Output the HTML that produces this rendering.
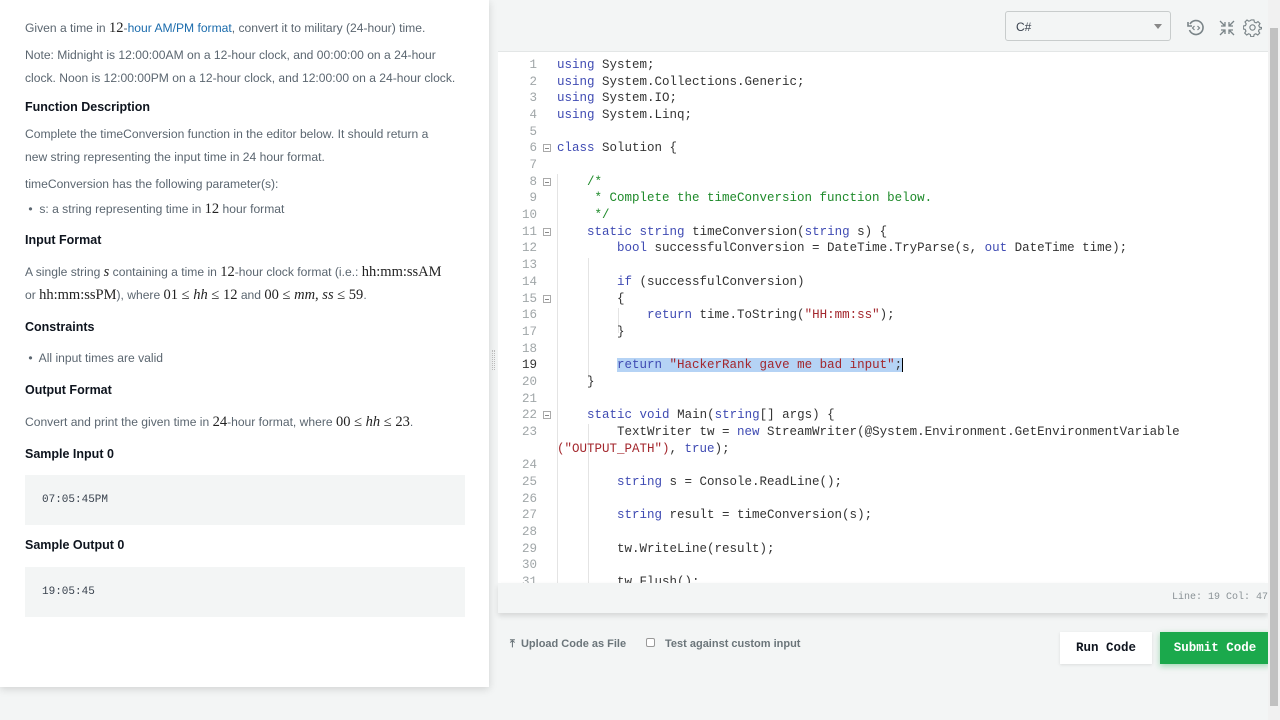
<!DOCTYPE html>
<html><head><meta charset="utf-8"><style>
*{margin:0;padding:0;box-sizing:border-box}
body{width:1280px;height:720px;overflow:hidden;background:#f3f5f5;font-family:"Liberation Sans",sans-serif;position:relative}
#left{position:absolute;left:0;top:0;width:489px;height:687px;background:#fff;box-shadow:0 2px 8px rgba(0,0,0,.15)}
.p{position:absolute;left:25px;font-size:12.1px;color:#5b6670;white-space:nowrap}
.h{position:absolute;left:25px;font-size:12.5px;font-weight:bold;color:#0e141e}
.m{font-family:"Liberation Serif",serif;font-size:14.5px;color:#222}
.mi{font-family:"Liberation Serif",serif;font-style:italic;font-size:14.5px;color:#222}
.a{color:#1a6bac}
.box{position:absolute;left:25px;width:440px;height:50px;background:#f3f5f5;font-family:"Liberation Mono",monospace;font-size:11px;color:#39424e;padding:19px 0 0 17px}
#top{position:absolute;left:498px;top:0;width:770px;height:52px;background:#f3f5f5;border-bottom:1px solid #e3e6e6}
#sel{position:absolute;left:1005px;top:11px;width:166px;height:30px;border:1px solid #c8cccc;border-radius:3px;background:#f3f5f5;font-size:12px;color:#39424e;padding:8px 0 0 10px}
#ed{position:absolute;left:498px;top:52px;width:770px;height:531px;background:#fff;overflow:hidden}
#status{position:absolute;left:498px;top:583px;width:770px;height:30px;background:#f3f5f5;box-shadow:0 3px 5px rgba(0,0,0,.12);font-family:"Liberation Mono",monospace;font-size:10px;color:#8a9296}
.r{position:absolute;left:0;height:16.68px;line-height:16.68px;font-family:"Liberation Mono",monospace;font-size:12.5px;color:#333;white-space:pre;width:770px}
.n{position:absolute;left:0;width:39px;text-align:right;color:#a0a6a8}
.c{position:absolute;left:59px}
.f{position:absolute;left:45px;top:4px;width:8px;height:8px;border:1px solid #aaa;font-size:0}
.f:after{content:"";position:absolute;left:1px;top:3px;width:4px;height:1px;background:#888}
.k{color:#3f4bb3}.s{color:#a3262c}.g{color:#1e8a2a}
.sel{background:#b5d3f5}
.gd{position:absolute;width:1px;background:#e4e4e4}
#sb{position:absolute;right:0;top:0;width:12px;height:720px;background:#f1f1f1}
#sb div{position:absolute;left:2px;top:28px;width:8px;height:678px;background:#c1c1c1}
.btn{position:absolute;top:632px;height:32px;font-family:"Liberation Mono",monospace;font-weight:bold;font-size:12.5px;text-align:center;line-height:32px}
</style></head><body>
<div id="left">
<div class="p" style="top:20px">Given a time in <span class="m">12</span>-<span class="a">hour AM/PM format</span>, convert it to military (24-hour) time.</div>
<div class="p" style="top:48px">Note: Midnight is 12:00:00AM on a 12-hour clock, and 00:00:00 on a 24-hour</div>
<div class="p" style="top:71px">clock. Noon is 12:00:00PM on a 12-hour clock, and 12:00:00 on a 24-hour clock.</div>
<div class="h" style="top:100px">Function Description</div>
<div class="p" style="top:127px">Complete the timeConversion function in the editor below. It should return a</div>
<div class="p" style="top:150px">new string representing the input time in 24 hour format.</div>
<div class="p" style="top:177px">timeConversion has the following parameter(s):</div>
<div class="p" style="top:201px">&nbsp;•&nbsp; s: a string representing time in <span class="m">12</span> hour format</div>
<div class="h" style="top:233px">Input Format</div>
<div class="p" style="top:264px">A single string <span class="mi">s</span> containing a time in <span class="m">12</span>-hour clock format (i.e.: <span class="m">hh:mm:ssAM</span></div>
<div class="p" style="top:287px">or <span class="m">hh:mm:ssPM</span>), where <span class="m">01 ≤ <i>hh</i> ≤ 12</span> and <span class="m">00 ≤ <i>mm</i>, <i>ss</i> ≤ 59</span>.</div>
<div class="h" style="top:320px">Constraints</div>
<div class="p" style="top:351px">&nbsp;•&nbsp; All input times are valid</div>
<div class="h" style="top:383px">Output Format</div>
<div class="p" style="top:414px">Convert and print the given time in <span class="m">24</span>-hour format, where <span class="m">00 ≤ <i>hh</i> ≤ 23</span>.</div>
<div class="h" style="top:447px">Sample Input 0</div>
<div class="box" style="top:475px">07:05:45PM</div>
<div class="h" style="top:538px">Sample Output 0</div>
<div class="box" style="top:567px">19:05:45</div>
</div>
<div style="position:absolute;left:492px;top:350px;width:3px;height:20px;border-left:1px dotted #bbb;border-right:1px dotted #bbb"></div>
<div id="top"></div>
<div id="sel">C#<span style="position:absolute;right:8px;top:12px;border:4px solid transparent;border-top:5px solid #888"></span></div>
<svg style="position:absolute;left:1186px;top:18px" width="20" height="20" viewBox="0 0 20 20" fill="none" stroke="#7a8488" stroke-width="1.6"><path d="M4 6A7 7 0 1 1 3.5 12"/><path d="M2 4v4h4"/><path d="M8.5 8l-2 2 2 2M11.5 8l2 2-2 2" stroke-width="1.2"/></svg>
<svg style="position:absolute;left:1218px;top:19px" width="18" height="18" viewBox="0 0 18 18" fill="none" stroke="#7a8488" stroke-width="1.3"><path d="M2 2l5 5M7 3v4H3M16 2l-5 5M11 3v4h4M2 16l5-5M3 11h4v4M16 16l-5-5M15 11h-4v4"/></svg>
<svg style="position:absolute;left:1243px;top:18px" width="19" height="19" viewBox="0 0 20 20" fill="none" stroke="#7a8488" stroke-width="1.2"><circle cx="10" cy="10" r="2.8"/><path d="M8.5 2h3l.5 2.3 1.8.8 2-1.3 2.1 2.1-1.3 2 .8 1.8L19.7 10l-.3 1.5-2.3.5-.8 1.8 1.3 2-2.1 2.1-2-1.3-1.8.8-.5 2.3h-3l-.5-2.3-1.8-.8-2 1.3-2.1-2.1 1.3-2-.8-1.8L.3 11.5V8.5l2.3-.5.8-1.8-1.3-2 2.1-2.1 2 1.3 1.8-.8z"/></svg>
<div id="ed">
<div class="gd" style="left:59px;top:122px;height:410px"></div>
<div class="gd" style="left:90px;top:206px;height:120px"></div>
<div class="gd" style="left:120px;top:256px;height:25px"></div>
<div class="gd" style="left:90px;top:372px;height:160px"></div>
<div id="code"></div>
</div>
<div id="status"><span style="position:absolute;right:0;top:9px">Line: 19 Col: 47</span></div>
<div style="position:absolute;left:510px;top:638px;font-size:11px;font-weight:bold;color:#6b757a">⤒&nbsp; Upload Code as File</div>
<div style="position:absolute;left:646px;top:638px;width:9px;height:9px;border:1px solid #999;border-radius:2px;background:#fff"></div>
<div style="position:absolute;left:665px;top:638px;font-size:11px;font-weight:bold;color:#6b757a">Test against custom input</div>
<div class="btn" style="left:1060px;width:92px;background:#fff;color:#0e141e;box-shadow:0 1px 3px rgba(0,0,0,.1)">Run Code</div>
<div class="btn" style="left:1160px;width:110px;background:#1ba94c;color:#fff;box-shadow:0 2px 6px rgba(27,169,76,.4)">Submit Code</div>
<div id="sb"><div></div></div>
<script>
var K=s=>'<span class="k">'+s+'</span>',S=s=>'<span class="s">'+s+'</span>',G=s=>'<span class="g">'+s+'</span>';
var rows=[
[1,0,K('using')+' System;'],[2,0,K('using')+' System.Collections.Generic;'],[3,0,K('using')+' System.IO;'],[4,0,K('using')+' System.Linq;'],[5,0,''],
[6,1,K('class')+' Solution {'],[7,0,''],[8,1,'    '+G('/*')],[9,0,'    '+G(' * Complete the timeConversion function below.')],[10,0,'    '+G(' */')],
[11,1,'    '+K('static')+' '+K('string')+' timeConversion('+K('string')+' s) {'],
[12,0,'        '+K('bool')+' successfulConversion = DateTime.TryParse(s, '+K('out')+' DateTime time);'],[13,0,''],
[14,0,'        '+K('if')+' (successfulConversion)'],[15,1,'        {'],[16,0,'            '+K('return')+' time.ToString('+S('"HH:mm:ss"')+');'],[17,0,'        }'],[18,0,''],
[19,0,'        <span class="sel">'+K('return')+' '+S('"HackerRank gave me bad input"')+';</span><span style="border-left:1px solid #000"></span>'],[20,0,'    }'],[21,0,''],
[22,1,'    '+K('static')+' '+K('void')+' Main('+K('string')+'[] args) {'],
[23,0,'        TextWriter tw = '+K('new')+' StreamWriter(@System.Environment.GetEnvironmentVariable'],[null,0,S('("OUTPUT_PATH")')+', '+K('true')+');'],
[24,0,''],[25,0,'        '+K('string')+' s = Console.ReadLine();'],[26,0,''],[27,0,'        '+K('string')+' result = timeConversion(s);'],[28,0,''],
[29,0,'        tw.WriteLine(result);'],[30,0,''],[31,0,'        tw.Flush();']];
var h='';rows.forEach((r,i)=>{var t=5+i*16.68;
h+='<div class="r" style="top:'+t+'px"><span class="n"'+(r[0]==19?' style="color:#333"':'')+'>'+(r[0]===null?'':r[0])+'</span>'+(r[1]?'<span class="f"></span>':'')+'<span class="c">'+r[2]+'</span></div>';});
document.getElementById('code').innerHTML=h;
</script>
</body></html>
